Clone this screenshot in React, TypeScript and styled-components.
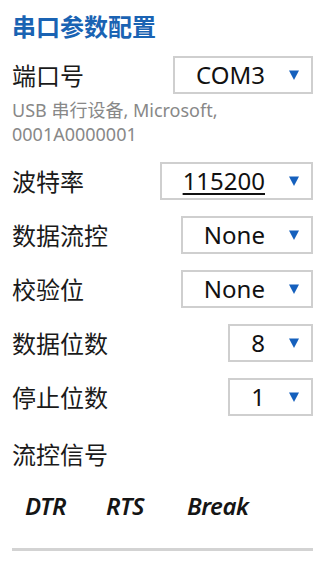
import React from "react";
import styled, { createGlobalStyle } from "styled-components";

const Global = createGlobalStyle`
  html, body { margin: 0; padding: 0; background: #ffffff; }
  body { font-family: "Noto Sans", "Noto Sans CJK SC", sans-serif; color: #1a1a1a; }
`;

const Page = styled.div`
  width: 331px;
  height: 565px;
  box-sizing: border-box;
  padding: 10px 18px 0 12px;
  display: flex;
  flex-direction: column;
  overflow: hidden;
`;

const Title = styled.h1`
  margin: 0;
  font-size: 24px;
  line-height: 32px;
  font-weight: 700;
  color: #1a63b3;
  font-family: "Noto Sans CJK SC", "Noto Sans", sans-serif;
`;

const Row = styled.div<{ $top: number }>`
  display: flex;
  align-items: center;
  justify-content: space-between;
  height: 38px;
  margin-top: ${(p) => p.$top}px;
`;

const Label = styled.span`
  font-size: 24px;
  line-height: 32px;
  color: #1a1a1a;
  font-family: "Noto Sans CJK SC", "Noto Sans", sans-serif;
`;

const SectionLabel = styled(Label)`
  display: block;
  margin-top: 22px;
`;

const SubNote = styled.div`
  margin-top: 4px;
  font-size: 18px;
  line-height: 24px;
  color: #888888;
  font-family: "Noto Sans", "Noto Sans CJK SC", sans-serif;
`;

const Select = styled.div`
  display: inline-flex;
  align-items: center;
  box-sizing: border-box;
  height: 38px;
  border: 2px solid #cfcfcf;
  padding: 0 12px 0 21px;
  gap: 24px;
  background: #fff;
`;

const Value = styled.span<{ $underline?: boolean }>`
  font-size: 24px;
  line-height: 32px;
  color: #111;
  text-decoration: ${(p) => (p.$underline ? "underline" : "none")};
  text-decoration-thickness: 2px;
  text-underline-offset: 3px;
`;

const Caret = () => (
  <svg width="10" height="10" viewBox="0 0 10 10">
    <polygon points="0,0.5 10,0.5 5,10" fill="#1560bd" />
  </svg>
);

const FlagRow = styled.div`
  display: flex;
  margin-top: 20px;
`;

const Flag = styled.button`
  width: 81px;
  height: 32px;
  padding: 0 0 0 13px;
  margin: 0;
  border: none;
  background: transparent;
  text-align: left;
  font-family: "Noto Sans", sans-serif;
  font-style: italic;
  font-weight: 600;
  font-size: 24px;
  line-height: 32px;
  letter-spacing: -0.5px;
  color: #151515;
`;

const Divider = styled.div`
  margin-top: 26px;
  height: 3px;
  background: #d3d3d3;
`;

type Field = { label: string; value: string; underline?: boolean };

const fields: Field[] = [
  { label: "波特率", value: "115200", underline: true },
  { label: "数据流控", value: "None" },
  { label: "校验位", value: "None" },
  { label: "数据位数", value: "8" },
  { label: "停止位数", value: "1" },
];

export default function App() {
  return (
    <>
      <Global />
      <Page>
        <Title>串口参数配置</Title>
        <Row $top={14}>
          <Label>端口号</Label>
          <Select>
            <Value>COM3</Value>
            <Caret />
          </Select>
        </Row>
        <SubNote>USB 串行设备, Microsoft, 0001A0000001</SubNote>
        {fields.map((f) => (
          <Row key={f.label} $top={16}>
            <Label>{f.label}</Label>
            <Select>
              <Value $underline={f.underline}>{f.value}</Value>
              <Caret />
            </Select>
          </Row>
        ))}
        <SectionLabel>流控信号</SectionLabel>
        <FlagRow>
          <Flag>DTR</Flag>
          <Flag>RTS</Flag>
          <Flag>Break</Flag>
        </FlagRow>
        <Divider />
      </Page>
    </>
  );
}
